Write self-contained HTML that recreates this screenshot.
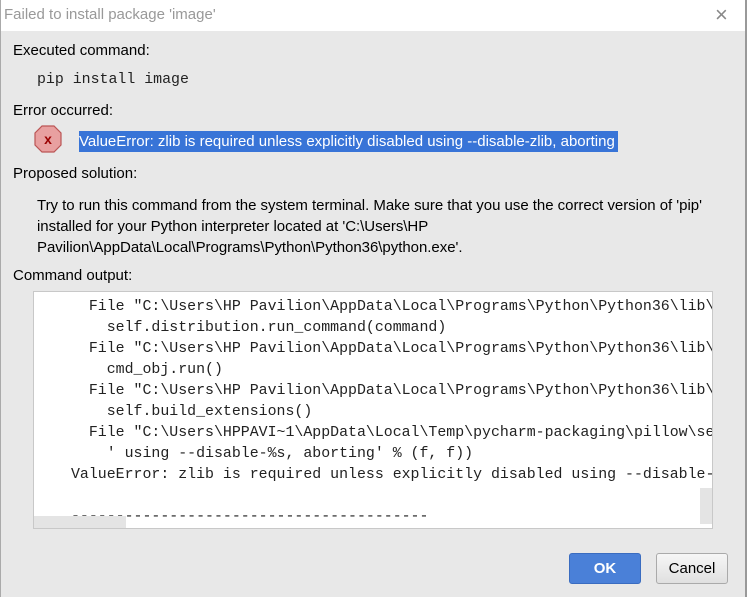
<!DOCTYPE html><html><head><style>
body{margin:0;width:747px;height:597px;background:#e8e8e8;position:relative;overflow:hidden;font-family:"Liberation Sans",sans-serif;font-size:15px;color:#000}
.t{position:absolute;white-space:nowrap}
#title{position:absolute;left:0;top:0;width:747px;height:31px;background:#fff}
.mono{font-family:"Liberation Mono",monospace;font-size:14.9px;color:#222}
#box{position:absolute;left:33px;top:291px;width:680px;height:238px;background:#fff;border:1px solid #c8c8c8;box-sizing:border-box;overflow:hidden}
.btn{position:absolute;top:553px;height:31px;width:72px;border-radius:3px;box-sizing:border-box;text-align:center;line-height:30px;font-size:15px}
</style></head><body>
<div id="title"><div class="t" style="left:4px;top:6px;font-size:15px;color:#999">Failed to install package 'image'</div>
<div class="t" style="left:715px;top:2px;font-size:22px;color:#888">×</div></div>
<div style="position:absolute;left:0;top:0;width:1px;height:597px;background:#aaa"></div>
<div style="position:absolute;left:745px;top:0;width:2px;height:597px;background:#999"></div>
<div class="t" style="left:13px;top:42px">Executed command:</div>
<div class="t mono" style="left:37px;top:72px">pip install image</div>
<div class="t" style="left:13px;top:102px">Error occurred:</div>
<svg style="position:absolute;left:34px;top:125px" width="28" height="28" viewBox="0 0 28 28"><polygon points="8,1 20,1 27,8 27,20 20,27 8,27 1,20 1,8" fill="#e8a0a0" stroke="#b55" stroke-width="1.2"/><text x="14" y="19" text-anchor="middle" font-family="Liberation Sans" font-weight="bold" font-size="14" fill="#900">x</text></svg>
<div class="t" style="left:79px;top:131px;height:21px;width:539px;background:#3874d7;color:#fff;line-height:21px;overflow:hidden">ValueError: zlib is required unless explicitly disabled using --disable-zlib, aborting</div>
<div class="t" style="left:13px;top:165px">Proposed solution:</div>
<div class="t" style="left:37px;top:195px;line-height:21px;letter-spacing:-0.03px">Try to run this command from the system terminal. Make sure that you use the correct version of 'pip'<br>installed for your Python interpreter located at 'C:\Users\HP<br>Pavilion\AppData\Local\Programs\Python\Python36\python.exe'.</div>
<div class="t" style="left:13px;top:267px">Command output:</div>
<div id="box"><div class="mono" style="position:absolute;left:37px;top:5px;line-height:21px;white-space:pre">  File "C:\Users\HP Pavilion\AppData\Local\Programs\Python\Python36\lib\
    self.distribution.run_command(command)
  File "C:\Users\HP Pavilion\AppData\Local\Programs\Python\Python36\lib\
    cmd_obj.run()
  File "C:\Users\HP Pavilion\AppData\Local\Programs\Python\Python36\lib\
    self.build_extensions()
  File "C:\Users\HPPAVI~1\AppData\Local\Temp\pycharm-packaging\pillow\se
    ' using --disable-%s, aborting' % (f, f))
ValueError: zlib is required unless explicitly disabled using --disable-

----------------------------------------</div>
<div style="position:absolute;left:0;top:224px;width:92px;height:13px;background:#e4e4e4"></div>
<div style="position:absolute;left:666px;top:196px;width:13px;height:36px;background:#e4e4e4"></div>
</div>
<div class="btn" style="left:569px;background:#4a80d8;border:1px solid #3a6cc0;color:#fff;font-weight:bold">OK</div>
<div class="btn" style="left:656px;background:linear-gradient(#f6f6f6,#e0e0e0);border:1px solid #aaa;color:#000">Cancel</div>
</body></html>
